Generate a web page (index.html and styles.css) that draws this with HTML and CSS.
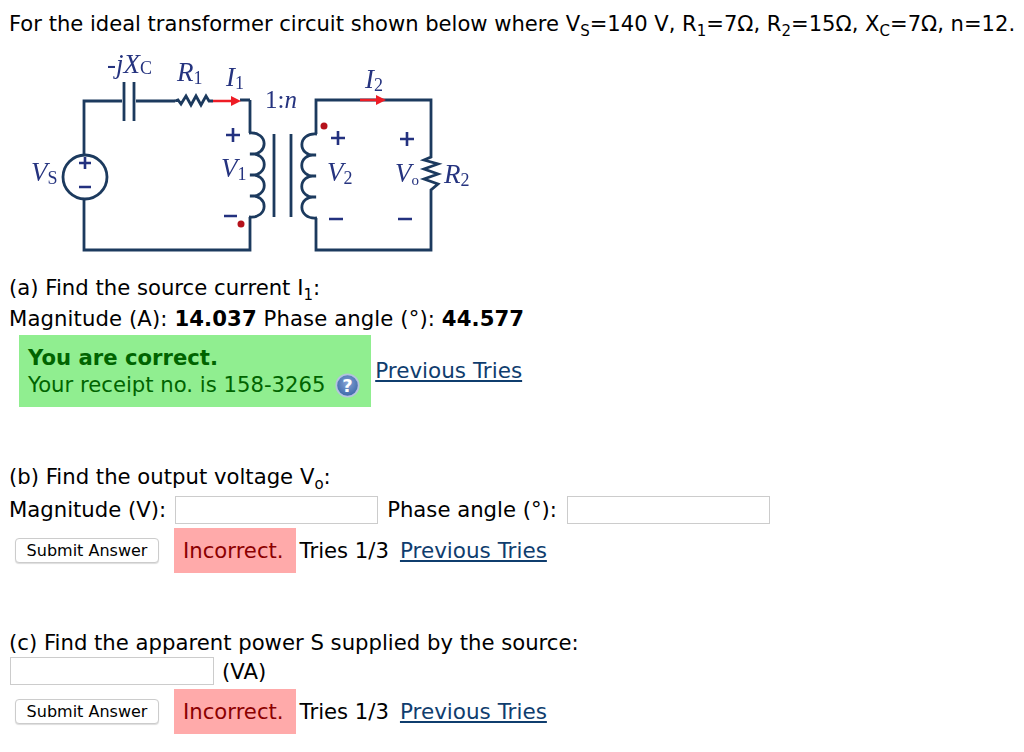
FILE: index.html
```html
<!DOCTYPE html>
<html lang="en">
<head>
    <meta charset="UTF-8">
    <meta name="viewport" content="width=device-width, initial-scale=1.0">
    <title>Ideal Transformer Problem</title>
    <link rel="stylesheet" href="styles.css">
</head>
<body>
    <p class="intro">For the ideal transformer circuit shown below where V<sub>S</sub>=140 V, R<sub>1</sub>=7Ω, R<sub>2</sub>=15Ω, X<sub>C</sub>=7Ω, n=12.</p>

    <svg class="circuit" width="480" height="226" viewBox="0 36 480 226">
        <g class="wire">
            <path d="M84 155V101H122M136 101H175"/>
            <path d="M124 82V121M134 82V121" class="plate"/>
            <path d="M175 101l3 -1 3 4 5 -8 5 9 5 -9 5 9 5 -9 3 5h4"/>
            <path d="M84 199V250H250V217"/>
            <path d="M250 100H240M250 100V133"/>
            <path d="M249 133c20 -2 20 23 1 21c19 -2 19 23 0 21c19 -2 19 23 0 21c19 -2 19 23 -1 21"/>
            <path d="M274 134V217M291 134V217"/>
            <path d="M317 134c-20 -2 -20 23 -1 21c-19 -2 -19 23 0 21c-19 -2 -19 23 0 21c-19 -2 -19 23 1 21"/>
            <path d="M316 134V100H431V157l-7 3 14 4 -14 5 14 5 -14 5 14 5 -7 6V250H316V218"/>
            <circle cx="85" cy="177" r="22"/>
        </g>
        <g class="current">
            <path d="M213 101H232M360 100H378"/>
            <path class="head" d="M231 96l10 5 -10 5zM376 95l10 5 -10 5z"/>
        </g>
        <circle class="dot" cx="241" cy="224" r="3.5"/>
        <circle class="dot" cx="324" cy="126" r="3.5"/>
        <g class="sign">
            <path d="M79 163H91M85 157V169M79 187H91"/>
            <path d="M226 135H240M233 128V142M224 216H237"/>
            <path d="M331 138H345M338 131V145M329 219H343"/>
            <path d="M400 139H414M407 132V146M398 219H412"/>
        </g>
        <g class="label">
            <text x="107" y="73">-jX<tspan class="small" dy="1">C</tspan></text>
            <text x="177" y="81">R<tspan class="small" dy="3">1</tspan></text>
            <text x="226" y="86">I<tspan class="small" dy="3">1</tspan></text>
            <text x="365" y="88">I<tspan class="small" dy="3">2</tspan></text>
            <text x="265" y="108" class="upright">1:<tspan class="italic">n</tspan></text>
            <text x="31" y="181">V<tspan class="small" dy="3">S</tspan></text>
            <text x="221" y="177">V<tspan class="small" dy="3">1</tspan></text>
            <text x="327" y="181">V<tspan class="small" dy="3">2</tspan></text>
            <text x="395" y="182">V<tspan class="tiny" dy="3">o</tspan></text>
            <text x="444" y="183">R<tspan class="small" dy="3">2</tspan></text>
        </g>
    </svg>

    <section class="part part-a">
        <p>(a) Find the source current I<sub>1</sub>:</p>
        <p class="given">Magnitude (A): <b>14.037</b> Phase angle (°): <b>44.577</b></p>
        <div class="result-row">
            <div class="correct">
                <strong>You are correct.</strong><br>
                Your receipt no. is 158-3265
                <svg class="help" width="25" height="25" viewBox="0 0 25 25">
                    <defs>
                        <radialGradient id="helpFill" cx="0.5" cy="0.4" r="0.6">
                            <stop offset="0" stop-color="#86a3d6"/>
                            <stop offset="1" stop-color="#3a66a8"/>
                        </radialGradient>
                    </defs>
                    <circle cx="12.5" cy="12.5" r="11.2" fill="url(#helpFill)" stroke="#b4c3df" stroke-width="1.8"/>
                    <text x="12.5" y="18.5" text-anchor="middle">?</text>
                </svg>
            </div>
            <a href="#" class="tries-link">Previous Tries</a>
        </div>
    </section>

    <section class="part part-b">
        <p>(b) Find the output voltage V<sub>o</sub>:</p>
        <div class="field-row">
            <span>Magnitude (V):</span>
            <input type="text" class="answer">
            <span>Phase angle (°):</span>
            <input type="text" class="answer answer-last">
        </div>
        <div class="submit-row">
            <button class="submit">Submit Answer</button>
            <span class="incorrect">Incorrect.</span>
            <span>Tries 1/3<a href="#" class="tries-inline">Previous Tries</a></span>
        </div>
    </section>

    <section class="part part-c">
        <p>(c) Find the apparent power S supplied by the source:</p>
        <div class="field-row field-row-alone">
            <input type="text" class="answer">
            <span>(VA)</span>
        </div>
        <div class="submit-row">
            <button class="submit">Submit Answer</button>
            <span class="incorrect">Incorrect.</span>
            <span>Tries 1/3<a href="#" class="tries-inline">Previous Tries</a></span>
        </div>
    </section>
</body>
</html>
```

FILE: styles.css
```css
body {
    margin: 0;
    padding: 8px 0 0 9px;
    background: #fff;
    color: #000;
    font-family: "DejaVu Sans", Verdana, sans-serif;
    font-size: 21.2px;
    line-height: 31px;
}

p {
    margin: 0;
}

sub {
    font-size: 15px;
    line-height: 0;
}

a {
    color: #0f3d6e;
}

.intro {
    font-size: 21.08px;
    white-space: nowrap;
}

/* circuit */
.circuit {
    display: block;
    margin: -3px 0 0 -9px;
    filter: blur(0.35px);
}

.wire path,
.wire circle {
    fill: none;
    stroke: #1c3a5e;
    stroke-width: 2.8;
}

.current path {
    fill: none;
    stroke: #ee1c25;
    stroke-width: 2.6;
}

.current .head {
    fill: #ee1c25;
    stroke: none;
}

.dot {
    fill: #b5121b;
}

.sign path {
    fill: none;
    stroke: #23317f;
    stroke-width: 2.6;
}

.label text {
    fill: #25337f;
    font-family: "Liberation Serif", serif;
    font-size: 27px;
    font-style: italic;
}

.label .small {
    font-size: 18px;
    font-style: normal;
}

.label .tiny {
    font-size: 15px;
    font-style: normal;
}

.label .upright {
    font-style: normal;
    font-size: 25px;
}

.label .italic {
    font-style: italic;
}

/* question parts */
.part-a {
    margin-top: 10px;
}

.part-b {
    margin-top: 54px;
}

.part-c {
    margin-top: 54px;
}

.given {
    letter-spacing: 0.1px;
}

.result-row {
    display: flex;
    align-items: flex-start;
    gap: 4px;
    margin: 1px 0 0 10px;
}

.correct {
    padding: 9px 11px 9px 9px;
    background: #90ee90;
    color: #006400;
    line-height: 27px;
    white-space: nowrap;
}

.help {
    margin-left: 3px;
    vertical-align: -6px;
}

.help text {
    fill: #fff;
    font-size: 18px;
    font-weight: bold;
}

.tries-link {
    margin-top: 20px;
    font-size: 21.5px;
}

.tries-inline {
    margin-left: 11px;
    font-size: 21.5px;
}

.field-row {
    display: flex;
    align-items: center;
    height: 33px;
    margin-top: 1px;
}

.answer {
    box-sizing: border-box;
    width: 203px;
    height: 28px;
    margin: 1px 9px 0;
    padding: 0;
    border: 1px solid #ccc;
    background: #fff;
}

.answer-last {
    margin-left: 10px;
}

.field-row-alone {
    height: 28px;
    margin-top: -1px;
    padding-left: 1px;
}

.field-row-alone .answer {
    width: 204px;
    margin: 0 8px 0 0;
}

.submit-row {
    display: flex;
    align-items: center;
    margin: 2px 0 0 6px;
}

.field-row-alone + .submit-row {
    margin-top: 4px;
}

.submit {
    box-sizing: border-box;
    width: 144px;
    height: 25px;
    margin-right: 15px;
    padding: 0;
    border: 1px solid #ccc;
    border-radius: 4px;
    background: #fff;
    box-shadow: 0 1px 1px #ddd;
    color: #000;
    font-family: "DejaVu Sans", Verdana, sans-serif;
    font-size: 16px;
}

.incorrect {
    margin-right: 4px;
    padding: 7px 12px 7px 9px;
    background: #ffaaaa;
    color: #8b0000;
}
```
